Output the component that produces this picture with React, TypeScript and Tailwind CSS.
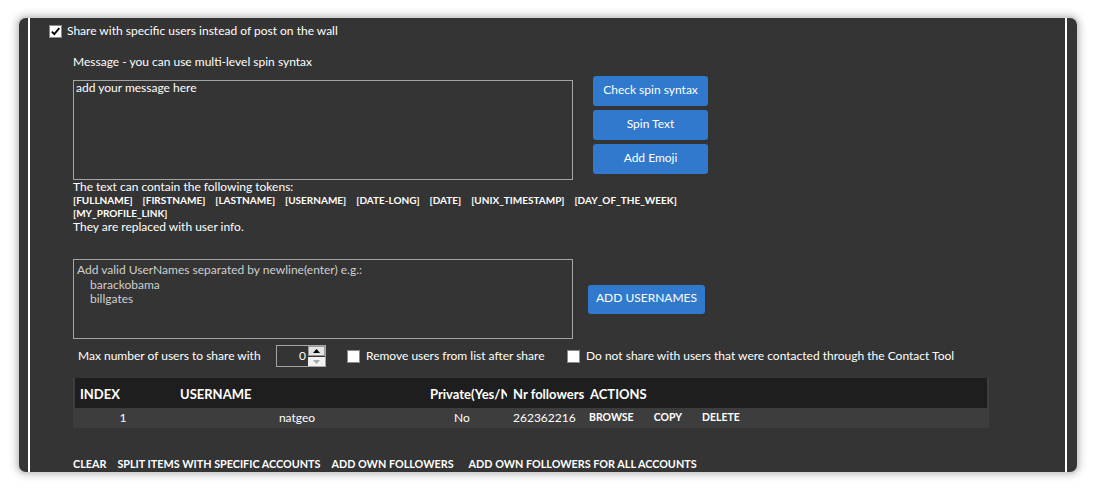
import React from "react";

function CheckBox({ checked }: { checked?: boolean }) {
  return (
    <div className="w-[13px] h-[13px] bg-white border border-[#8a8a8a] flex items-center justify-center shrink-0">
      {checked && (
        <svg width="11" height="11" viewBox="0 0 11 11">
          <path d="M1.8 5.6 L4.3 8.2 L9.3 2.2" stroke="#000" strokeWidth="1.8" fill="none" />
        </svg>
      )}
    </div>
  );
}

function BlueButton({ children, w, h }: { children: React.ReactNode; w: string; h: string }) {
  return (
    <div className={`${w} ${h} bg-[#3079cd] rounded-[3px] flex items-center justify-center text-white text-[12px] pb-[2px]`}>
      {children}
    </div>
  );
}

export default function App() {
  const tokens = ["[FULLNAME]", "[FIRSTNAME]", "[LASTNAME]", "[USERNAME]", "[DATE-LONG]", "[DATE]", "[UNIX_TIMESTAMP]", "[DAY_OF_THE_WEEK]"];
  return (
    <div className="w-[1095px] h-[492px] bg-white pt-[16px] pl-[17px] font-[family-name:Lato,sans-serif] overflow-hidden">
      <div className="w-[1062px] h-[458px] rounded-[9px] border-2 border-[#d4d4d4] shadow-[0_0_8px_rgba(0,0,0,0.28)] bg-[#353535] flex overflow-hidden">
        <div className="w-[9px] shrink-0" />
        <div className="w-[2px] bg-white shrink-0" />
        <div className="flex-1 bg-[#343434] text-white overflow-hidden">
          {/* share checkbox */}
          <div className="mt-[7px] ml-[19px] flex items-center h-[13px] gap-[5px]">
            <CheckBox checked />
            <span className="text-[12px] leading-[14px] -mt-[1px]">Share with specific users instead of post on the wall</span>
          </div>
          <div className="ml-[43px] mt-[16px] text-[12px] leading-[16px]">Message - you can use multi-level spin syntax</div>
          {/* message area */}
          <div className="ml-[43px] mt-[10px] flex items-start gap-[20px]">
            <div className="w-[500px] h-[100px] border border-[#a5a5a5] px-[2px] text-[12px] leading-[14px]">add your message here</div>
            <div className="-mt-[4px] flex flex-col gap-[4px]">
              <BlueButton w="w-[115px]" h="h-[30px]">Check spin syntax</BlueButton>
              <BlueButton w="w-[115px]" h="h-[30px]">Spin Text</BlueButton>
              <BlueButton w="w-[115px]" h="h-[30px]">Add Emoji</BlueButton>
            </div>
          </div>
          <div className="ml-[43px]">
            <div className="text-[12px] leading-[14px]">The text can contain the following tokens:</div>
            <div className="flex flex-wrap w-[620px] text-[10px] font-bold leading-[13px] gap-x-[10px]">
              {tokens.map((t) => (
                <span key={t}>{t}</span>
              ))}
              <span>[MY_PROFILE_LINK]</span>
            </div>
            <div className="text-[12px] leading-[14px]">They are replaced with user info.</div>
          </div>
          {/* usernames */}
          <div className="ml-[43px] mt-[25px] flex items-center gap-[15px]">
            <div className="w-[500px] h-[80px] border border-[#a5a5a5] px-[3px] pt-[3px] text-[12px] leading-[14.5px] text-[#cfcfcf]">
              <div>Add valid UserNames separated by newline(enter) e.g.:</div>
              <div className="pl-[13px]">barackobama</div>
              <div className="pl-[13px]">billgates</div>
            </div>
            <BlueButton w="w-[117px]" h="h-[29px]">ADD USERNAMES</BlueButton>
          </div>
          {/* options row */}
          <div className="ml-[48px] mt-[6px] flex items-center h-[22px] text-[12px]">
            <div className="w-[198px] -mt-[1px]">Max number of users to share with</div>
            <div className="w-[50px] h-[22px] border border-[#a5a5a5] flex items-center">
              <div className="flex-1 text-right pr-[2px]">0</div>
              <div className="w-[17px] h-[20px] flex flex-col gap-[1px]">
                <div className="h-[10px] bg-[#e3e3e3] border border-[#9a9a9a] flex items-center justify-center">
                  <svg width="7" height="4" viewBox="0 0 7 4"><path d="M0 4 L3.5 0 L7 4 Z" fill="#000" /></svg>
                </div>
                <div className="h-[9px] bg-[#f2f2f2] flex items-center justify-center">
                  <svg width="7" height="4" viewBox="0 0 7 4"><path d="M0 0 L3.5 4 L7 0 Z" fill="#a8a8a8" /></svg>
                </div>
              </div>
            </div>
            <div className="ml-[21px] w-[220px] flex items-center gap-[6px]">
              <CheckBox />
              <span className="-mt-[1px]">Remove users from list after share</span>
            </div>
            <div className="flex items-center gap-[6px]">
              <CheckBox />
              <span className="-mt-[1px]">Do not share with users that were contacted through the Contact Tool</span>
            </div>
          </div>
          {/* table */}
          <div className="ml-[43px] mt-[11px] w-[916px] h-[50px] bg-[#3d3d3d] px-[2px]">
            <div className="h-[30px] bg-[#1e1e1e] flex items-center text-[13px] font-bold pt-[3px] whitespace-nowrap">
              <div className="w-[100px] pl-[5px]">INDEX</div>
              <div className="w-[252px] pl-[5px]">USERNAME</div>
              <div className="w-[83px] pl-[3px]">
                <div className="w-[77px] overflow-hidden">Private(Yes/No)</div>
              </div>
              <div className="w-[77px] pl-[3px]">
                <div className="w-[73px] overflow-hidden">Nr followers</div>
              </div>
              <div className="pl-[3px]">ACTIONS</div>
            </div>
            <div className="h-[20px] flex items-center text-[12px] whitespace-nowrap">
              <div className="w-[100px] text-center pr-[4px]">1</div>
              <div className="w-[252px] text-center pr-[8px]">natgeo</div>
              <div className="w-[83px] text-center pr-[13px]">No</div>
              <div className="w-[77px] pl-[3px]">262362216</div>
              <div className="pl-[2px] flex text-[10.5px] font-bold gap-[20px]">
                <span>BROWSE</span>
                <span>COPY</span>
                <span>DELETE</span>
              </div>
            </div>
          </div>
          {/* bottom links */}
          <div className="ml-[43px] mt-[29px] flex text-[10.8px] font-bold leading-[14px] whitespace-nowrap">
            <span>CLEAR</span>
            <span className="ml-[11px]">SPLIT ITEMS WITH SPECIFIC ACCOUNTS</span>
            <span className="ml-[11px]">ADD OWN FOLLOWERS</span>
            <span className="ml-[15px]">ADD OWN FOLLOWERS FOR ALL ACCOUNTS</span>
          </div>
        </div>
        <div className="w-[2px] bg-white shrink-0" />
        <div className="w-[10px] shrink-0" />
      </div>
    </div>
  );
}
